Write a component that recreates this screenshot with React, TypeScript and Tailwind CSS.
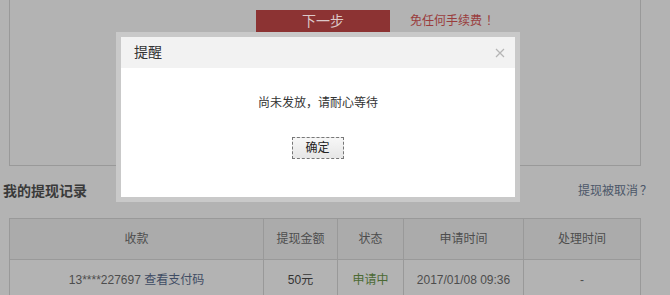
export default function App() {
  return (
    <div
      className="relative w-[670px] h-[295px] overflow-hidden bg-[#b3b3b3] text-[12px] text-[#4d4d4d]"
      style={{ fontFamily: '"Liberation Sans", "Noto Sans CJK SC", sans-serif' }}
    >
      {/* top panel */}
      <div className="ml-[9px] w-[632px] h-[166px] border-x border-b border-[#999]">
        <div className="flex items-center pt-[10px]">
          <div className="ml-[246px] w-[134px] h-[22px] bg-[#8c3333] text-[#dcc8c8] text-[14px] flex items-center justify-center">
            下一步
          </div>
          <span className="ml-[20px] text-[12px] text-[#9a3d3d]">
            免任何手续费<span className="ml-[4px]">！</span>
          </span>
        </div>
      </div>

      {/* records title */}
      <div className="w-[652px] flex items-center justify-between mt-[15px] h-[20px]">
        <h2 className="ml-[3px] text-[14px] font-bold text-[#3a3a3a]">我的提现记录</h2>
        <a className="text-[12px] text-[#4b5668]">
          提现被取消<span className="ml-[2px]">？</span>
        </a>
      </div>

      {/* table */}
      <table className="ml-[9px] mt-[17px] w-[632px] border-collapse text-center text-[12px]">
        <thead>
          <tr className="h-[41px] bg-[#ababab]">
            <th className="w-[254px] border border-[#999] font-normal">收款</th>
            <th className="w-[74px] border border-[#999] font-normal">提现金额</th>
            <th className="w-[66px] border border-[#999] font-normal">状态</th>
            <th className="w-[120px] border border-[#999] font-normal">申请时间</th>
            <th className="border border-[#999] font-normal">处理时间</th>
          </tr>
        </thead>
        <tbody>
          <tr className="h-[40px]">
            <td className="border border-[#999]">
              13****227697 <span className="text-[#3f4c64]">查看支付码</span>
            </td>
            <td className="border border-[#999] text-[#333]">50元</td>
            <td className="border border-[#999] text-[#4b6a33]">申请中</td>
            <td className="border border-[#999]">2017/01/08 09:36</td>
            <td className="border border-[#999]">-</td>
          </tr>
        </tbody>
      </table>

      {/* dialog */}
      <div className="absolute left-[116px] top-[32px] w-[404px] h-[170px] bg-[#c9c9c9] p-[5px]">
        <div className="h-full bg-white flex flex-col">
          <div className="h-[31px] bg-[#f2f2f2] flex items-center justify-between pl-[13px] pr-[10px]">
            <span className="text-[14px] text-[#333]">提醒</span>
            <svg width="10" height="10" viewBox="0 0 10 10" className="text-[#b5b5b5]">
              <path d="M1 1 L9 9 M9 1 L1 9" stroke="currentColor" strokeWidth="1.2" />
            </svg>
          </div>
          <p className="mt-[26px] text-center text-[12px] text-[#333]">尚未发放，请耐心等待</p>
          <div className="flex justify-center mt-[25px]">
            <button className="ml-[-1px] w-[52px] h-[22px] border border-dashed border-[#777] bg-gradient-to-b from-[#f7f7f7] to-[#e6e6e6] text-[12px] text-[#222]">
              确定
            </button>
          </div>
        </div>
      </div>
    </div>
  );
}
